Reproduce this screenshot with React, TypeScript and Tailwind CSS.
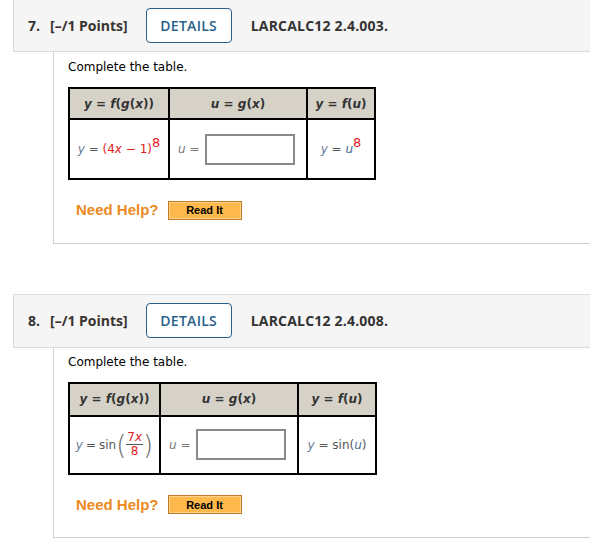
import React from 'react'

const math = { fontFamily: '"DejaVu Sans", Verdana, sans-serif' }

function Header({ num, code, first }: { num: string; code: string; first?: boolean }) {
  return (
    <div
      className={`flex h-[54px] items-center border border-[#dcdcdc] bg-[#f5f5f5] pl-[14px] text-[14px] font-bold text-[#333] ${first ? '-mt-[2px]' : ''}`}
      style={{ fontFamily: '"Open Sans", sans-serif' }}
    >
      <span className="w-[22px]">{num}</span>
      <span className="text-[#3a3330]">[–/1 Points]</span>
      <button className="ml-[18px] h-[35px] w-[86px] rounded-[4px] border border-[#2a5f8a] bg-white text-[14px] font-semibold tracking-[0.3px] text-[#2a5f8a]">
        DETAILS
      </button>
      <span className="ml-[19px] tracking-[0.2px]">{code}</span>
    </div>
  )
}

function HelpRow() {
  return (
    <div className="mt-[19px] flex items-center" style={{ fontFamily: '"Liberation Sans", Arial, sans-serif' }}>
      <span className="ml-[8px] text-[15px] font-bold text-[#eb8a1f]">Need Help?</span>
      <button className="ml-[9px] flex h-[19px] w-[74px] items-center justify-center border border-[#c47a24] bg-[#fdb94b] text-[11px] font-bold text-black shadow-[inset_0_0_0_1px_#ffd38a]">
        Read It
      </button>
    </div>
  )
}

function V({ children, c = 'text-[#4a6d8c]' }: { children: React.ReactNode; c?: string }) {
  return <i className={c}>{children}</i>
}

function Section({
  widths,
  headH,
  bodyH,
  top,
  col1,
  col3,
}: {
  widths: [number, number, number]
  headH: number
  bodyH: number
  top: string
  col1: React.ReactNode
  col3: React.ReactNode
}) {
  const total = widths[0] + widths[1] + widths[2]
  return (
    <div className={`ml-[40px] border-b border-l border-[#cfcfcf] pb-[21px] pl-[14px] ${top}`}>
      <div className="text-[12px] text-black" style={math}>Complete the table.</div>
      <table className="mt-[11px] table-fixed border-collapse text-[12px]" style={{ ...math, width: total }}>
        <colgroup>
          <col style={{ width: widths[0] }} />
          <col style={{ width: widths[1] }} />
          <col style={{ width: widths[2] }} />
        </colgroup>
        <thead>
          <tr className="bg-[#d6d2c8] font-bold text-[#333]" style={{ height: headH }}>
            <th className="border-2 border-black">
              <i>y</i> = <i>f</i>(<i>g</i>(<i>x</i>))
            </th>
            <th className="border-2 border-black">
              <i>u</i> = <i>g</i>(<i>x</i>)
            </th>
            <th className="border-2 border-black">
              <i>y</i> = <i>f</i>(<i>u</i>)
            </th>
          </tr>
        </thead>
        <tbody>
          <tr style={{ height: bodyH }} className="text-[#555]">
            <td className="border-2 border-black text-center">{col1}</td>
            <td className="border-2 border-black">
              <div className="flex items-center pl-[8px]">
                <V c="text-[#777]">u</V>
                <span className="ml-[4px] text-[#777]">=</span>
                <div className="ml-[5px] h-[31px] w-[90px] border-2 border-[#8a8a8a] bg-white" />
              </div>
            </td>
            <td className="border-2 border-black text-center">{col3}</td>
          </tr>
        </tbody>
      </table>
      <HelpRow />
    </div>
  )
}

export default function App() {
  return (
    <div className="min-h-[560px] w-[590px] overflow-hidden bg-white">
      <div className="ml-[13px] w-[600px]">
        <Header num="7." code="LARCALC12 2.4.003." first />
        <Section
          widths={[100, 138, 68]}
          headH={31}
          bodyH={60}
          top="pt-[6px]"
          col1={
            <span>
              <V c="text-[#6a7f95]">y</V> = <span className="text-[#e0201c]">(4<i>x</i> − 1)</span>
              <sup className="text-[13px] text-[#e0201c]">8</sup>
            </span>
          }
          col3={
            <span>
              <V c="text-[#6a7f95]">y</V> = <V>u</V>
              <sup className="text-[13px] text-[#e0201c]">8</sup>
            </span>
          }
        />
        <div className="h-[50px]" />
        <Header num="8." code="LARCALC12 2.4.008." />
        <Section
          widths={[91, 138, 78]}
          headH={33}
          bodyH={58}
          top="pt-[5px]"
          col1={
            <span className="inline-flex items-center whitespace-nowrap">
              <V c="text-[#6a7f95]">y</V>
              <span className="mx-[3px]">=</span>
              <span>sin</span>
              <span className="text-[26px] font-extralight leading-none text-[#666]">(</span>
              <span className="inline-flex flex-col items-center leading-[13px] text-[#e0201c]">
                <span className="border-b border-[#555] px-[1px]">
                  7<i>x</i>
                </span>
                <span>8</span>
              </span>
              <span className="text-[26px] font-extralight leading-none text-[#666]">)</span>
            </span>
          }
          col3={
            <span>
              <V c="text-[#6a7f95]">y</V> = sin(<V>u</V>)
            </span>
          }
        />
      </div>
    </div>
  )
}
